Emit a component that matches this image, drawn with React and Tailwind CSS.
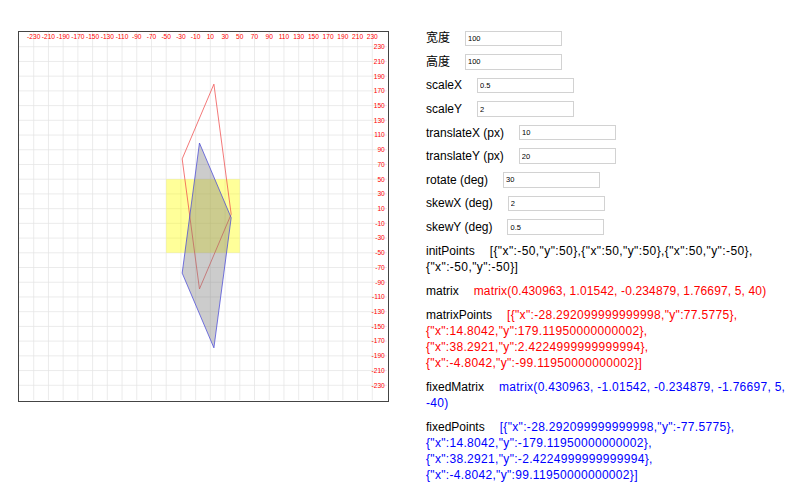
import React from "react";

const FONT = { fontFamily: '"Liberation Sans", "Noto Sans CJK SC", Arial, sans-serif' };

function Canvas() {
  const lines = [];
  for (let k = 1; k < 25; k++) lines.push(k * 20);
  const labels = [];
  for (let u = -230; u <= 230; u += 20) labels.push(u);
  const toPts = (arr) => arr.map(([x, y]) => `${250 + x},${250 - y}`).join(" ");
  const red = [
    [-28.2921, 77.5775],
    [14.8042, 179.1195],
    [38.2921, 2.4225],
    [-4.8042, -99.1195],
  ];
  const blue = red.map(([x, y]) => [x, -y]);
  return (
    <div className="w-[371px] h-[371px] shrink-0 border-[1.5px] border-[#444] bg-white">
      <svg width="368" height="368" viewBox="0 0 500 500" className="block">
        {lines.map((p) => (
          <line key={"v" + p} x1={p} y1={0} x2={p} y2={500} stroke="#e4e4e4" strokeWidth="1" />
        ))}
        {lines.map((p) => (
          <line key={"h" + p} x1={0} y1={p} x2={500} y2={p} stroke="#e4e4e4" strokeWidth="1" />
        ))}
        <rect x="200" y="200" width="100" height="100" fill="rgba(255,255,0,0.4)" />
        <polygon points={toPts(red)} fill="none" stroke="#ee4848" strokeWidth="1" />
        <polygon points={toPts(blue)} fill="rgba(128,128,128,0.4)" stroke="#4646d8" strokeWidth="1" />
        {labels.map((u) => (
          <text
            key={"t" + u}
            x={250 + u}
            y={10}
            fontSize="9"
            fill="#ff0000"
            textAnchor="middle"
            style={{ fontFamily: '"Liberation Sans", Arial, sans-serif' }}
          >
            {u}
          </text>
        ))}
        {labels.map((u) => (
          <text
            key={"r" + u}
            x={497}
            y={250 - u + 3.2}
            fontSize="9"
            fill="#ff0000"
            textAnchor="end"
            style={{ fontFamily: '"Liberation Sans", Arial, sans-serif' }}
          >
            {u}
          </text>
        ))}
      </svg>
    </div>
  );
}

function InputRow({ label, value }) {
  return (
    <div className="flex items-center h-[15.6px]">
      <span className="text-[12px] leading-[16px] text-black whitespace-nowrap">{label}</span>
      <input
        readOnly
        value={value}
        className="ml-[15px] w-[97px] h-[15.6px] border border-[#d2d2d2] bg-white px-[2px] text-[7.5px] text-black outline-none"
        style={FONT}
      />
    </div>
  );
}

function Block({ label, lines, color, tracking }) {
  return (
    <div className="text-[12px] leading-[16px] text-black">
      <span className="mr-[15px]">{label}</span>
      <span className={"whitespace-nowrap " + tracking} style={{ color }}>
        {lines.map((l, i) => (
          <React.Fragment key={i}>
            {i > 0 && <br />}
            {l}
          </React.Fragment>
        ))}
      </span>
    </div>
  );
}

export default function App() {
  return (
    <div className="w-[800px] h-[504px] bg-white flex pl-[18px] pt-[30.5px]" style={FONT}>
      <Canvas />
      <div className="ml-[37px] flex flex-col gap-[8px]">
        <div className="flex flex-col gap-[8px]">
          <InputRow label="宽度" value="100" />
          <InputRow label="高度" value="100" />
          <InputRow label="scaleX" value="0.5" />
          <InputRow label="scaleY" value="2" />
          <InputRow label="translateX (px)" value="10" />
          <InputRow label="translateY (px)" value="20" />
          <InputRow label="rotate (deg)" value="30" />
          <InputRow label="skewX (deg)" value="2" />
          <InputRow label="skewY (deg)" value="0.5" />
        </div>
        <Block
          label="initPoints"
          color="#000000"
          tracking="tracking-[0.4px]"
          lines={['[{"x":-50,"y":50},{"x":50,"y":50},{"x":50,"y":-50},', '{"x":-50,"y":-50}]']}
        />
        <Block
          label="matrix"
          color="#ff0000"
          tracking="tracking-[0.15px]"
          lines={["matrix(0.430963, 1.01542, -0.234879, 1.76697, 5, 40)"]}
        />
        <Block
          label="matrixPoints"
          color="#ff0000"
          tracking="tracking-[0.32px]"
          lines={[
            '[{"x":-28.292099999999998,"y":77.5775},',
            '{"x":14.8042,"y":179.11950000000002},',
            '{"x":38.2921,"y":2.4224999999999994},',
            '{"x":-4.8042,"y":-99.11950000000002}]',
          ]}
        />
        <Block
          label="fixedMatrix"
          color="#0000ff"
          tracking="tracking-[0.28px]"
          lines={["matrix(0.430963, -1.01542, -0.234879, -1.76697, 5,", "-40)"]}
        />
        <Block
          label="fixedPoints"
          color="#0000ff"
          tracking="tracking-[0.32px]"
          lines={[
            '[{"x":-28.292099999999998,"y":-77.5775},',
            '{"x":14.8042,"y":-179.11950000000002},',
            '{"x":38.2921,"y":-2.4224999999999994},',
            '{"x":-4.8042,"y":99.11950000000002}]',
          ]}
        />
      </div>
    </div>
  );
}
